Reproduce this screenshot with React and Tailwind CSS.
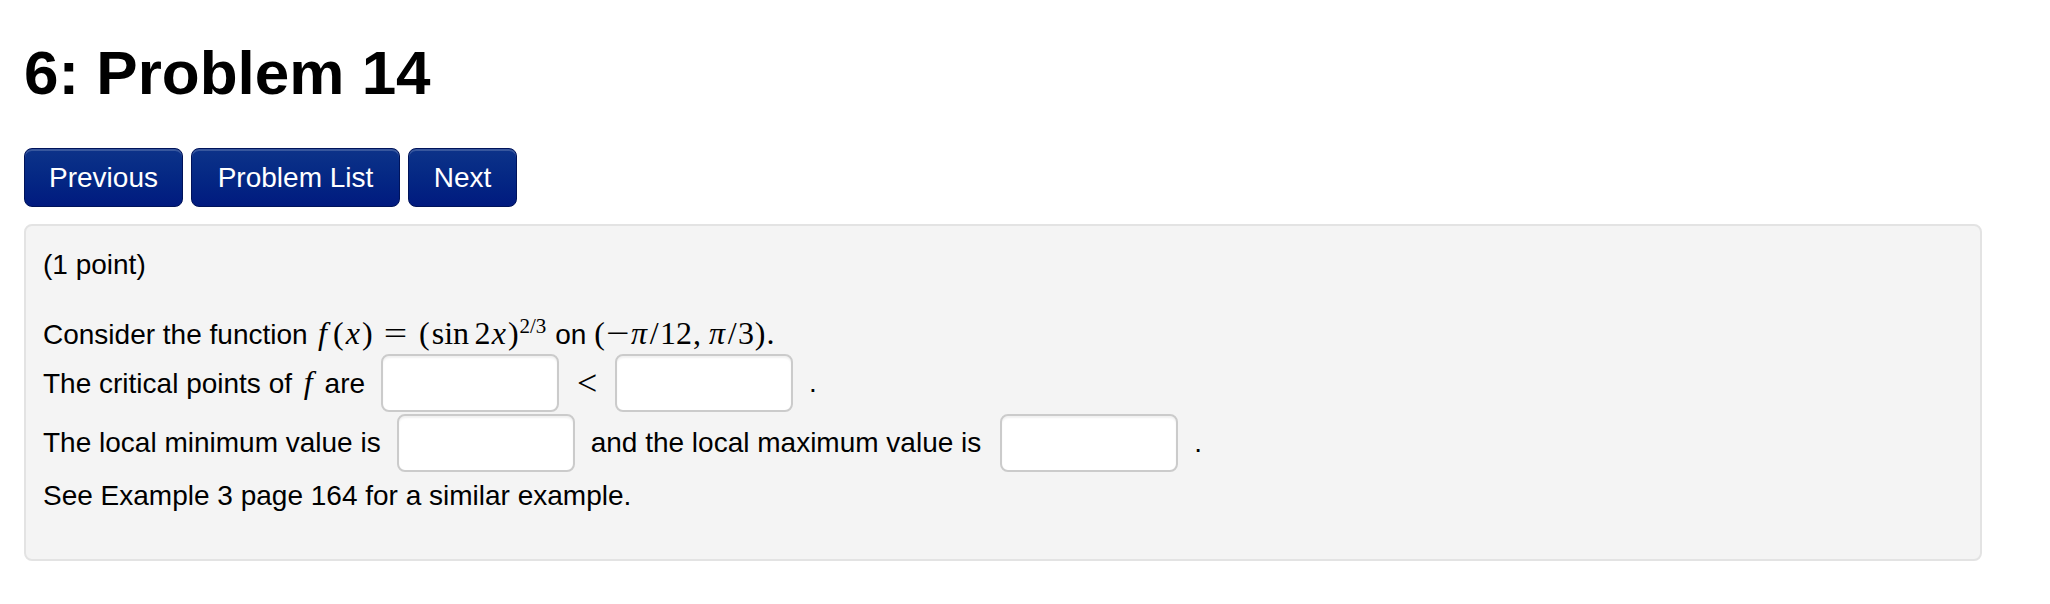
import React from 'react';

// small helper for a fixed-width math glyph box
function G({ w, italic, className = '', children }) {
  return (
    <span className={`inline-block text-center ${w} ${italic ? 'italic' : ''} ${className}`}>
      {children}
    </span>
  );
}

function NavButton({ label, width }) {
  return (
    <button
      className={`${width} h-[59px] rounded-lg border border-[#00135a] bg-linear-to-b from-[#0d3389] to-[#011a7f] text-[28px] leading-[40px] text-white shadow-[inset_0_2px_0_rgba(255,255,255,0.18)]`}
    >
      {label}
    </button>
  );
}

function AnswerBox({ className = '' }) {
  return (
    <input
      type="text"
      className={`w-[178px] h-[58px] shrink-0 rounded-lg border-2 border-[#cbcbcb] bg-white shadow-[inset_0_2px_2px_rgba(0,0,0,0.06)] outline-none ${className}`}
    />
  );
}

export default function App() {
  const serif = "font-['Liberation_Serif',serif]";

  return (
    <div className="min-h-[604px] bg-white font-['Liberation_Sans',Arial,sans-serif] text-black">
      {/* Title */}
      <h1 className="ml-6 pt-[39px] text-[62px] font-bold leading-[68px]">6: Problem 14</h1>

      {/* Navigation */}
      <div className="ml-6 mt-[41px] flex gap-2">
        <NavButton label="Previous" width="w-[159px]" />
        <NavButton label="Problem List" width="w-[209px]" />
        <NavButton label="Next" width="w-[109px]" />
      </div>

      {/* Problem body */}
      <div className="ml-6 mt-[17px] w-[1958px] rounded-lg border-2 border-[#e3e3e3] bg-[#f4f4f4] pl-[17px] pt-[19px] pb-[43px] text-[28px] leading-[40px]">
        <div className="h-[40px]">(1 point)</div>

        <div className="mt-[28px] h-[40px] whitespace-nowrap">
          Consider the function{' '}
          <span className={`${serif} text-[32px]`}>
            <G w="w-[20px]" italic className="-ml-[3px]">f</G>
            <G w="w-[12px]">(</G>
            <G w="w-[17px]" italic>x</G>
            <G w="w-[12px]">)</G>
            <G w="w-[45px]" className="scale-x-[1.3]">=</G>
            <G w="w-[12px]">(</G>
            <G w="w-[40px]">sin</G>
            <G w="w-[4px]"></G>
            <G w="w-[16px]">2</G>
            <G w="w-[17px]" italic>x</G>
            <G w="w-[12px]">)</G>
            <G w="w-[26px]" className="align-[11px] text-[21px] leading-[20px]">2/3</G>
          </span>{' '}
          <span className="ml-[2px]">on</span>{' '}
          <span className={`${serif} text-[32px]`}>
            <G w="w-[11px]">(</G>
            <G w="w-[25px]" className="scale-x-[1.3]">−</G>
            <G w="w-[18px]" italic>π</G>
            <G w="w-[12px]">/</G>
            <G w="w-[32px]">12</G>
            <G w="w-[10px]">,</G>
            <G w="w-[6px]"></G>
            <G w="w-[18px]" italic>π</G>
            <G w="w-[12px]">/</G>
            <G w="w-[16px]">3</G>
            <G w="w-[12px]">)</G>
            <G w="w-[9px]">.</G>
          </span>
        </div>

        <div className="mt-px flex h-[58px] items-center whitespace-nowrap">
          <span>
            The critical points of{' '}
            <span className={`${serif} inline-block w-[17px] text-center text-[32px] italic`}>f</span> are
          </span>
          <AnswerBox className="ml-4" />
          <span className={`${serif} inline-block w-[56px] text-center text-[36px]`}>&lt;</span>
          <AnswerBox />
          <span className="ml-4">.</span>
        </div>

        <div className="mt-[2px] flex h-[58px] items-center whitespace-nowrap">
          <span>The local minimum value is</span>
          <AnswerBox className="ml-4" />
          <span className="ml-4">and the local maximum value is</span>
          <AnswerBox className="ml-[19px]" />
          <span className="ml-4">.</span>
        </div>

        <div className="mt-1 h-[40px]">See Example 3 page 164 for a similar example.</div>
      </div>
    </div>
  );
}
